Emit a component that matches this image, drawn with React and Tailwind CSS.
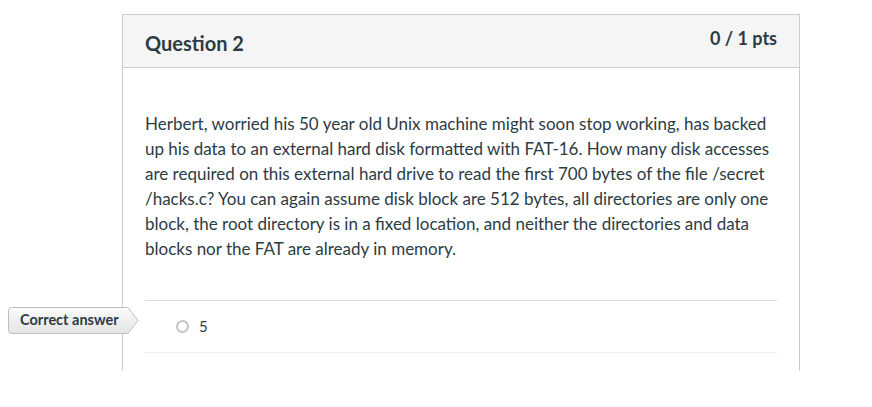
import React from 'react';

const CorrectTag = () => (
  <div className="absolute left-[-137px] top-[6px] w-[131px] h-[27px] flex items-center pl-[12px]">
    <svg className="absolute inset-0" width="131" height="27" viewBox="0 0 131 27">
      <defs>
        <linearGradient id="tagFill" x1="0" y1="0" x2="0" y2="1">
          <stop offset="0" stopColor="#fbfbfb" />
          <stop offset="1" stopColor="#e4e4e4" />
        </linearGradient>
      </defs>
      <path
        d="M3.5,0.5 H120 L130,13.5 L120,26.5 H3.5 Q0.5,26.5 0.5,23.5 V3.5 Q0.5,0.5 3.5,0.5 Z"
        fill="url(#tagFill)"
        stroke="#bfbfbf"
      />
    </svg>
    <span className="relative text-[14.5px] font-bold text-[#2d3b45] leading-none">Correct answer</span>
  </div>
);

const Answer = ({ label, correct, first }) => (
  <div className={`relative h-[52px] flex items-center pl-[31px] border-t ${first ? 'border-[#dcdcdc]' : 'border-[#efefef]'}`}>
    {correct && <CorrectTag />}
    <span className="w-[13px] h-[13px] rounded-full border-2 border-[#c4c4c4] bg-white mr-[10px]" />
    {label && <span className="text-[15px] text-[#2d3b45]">{label}</span>}
  </div>
);

export default function App() {
  return (
    <div className="w-full h-[407px] bg-white" style={{ fontFamily: 'Lato, "Open Sans", sans-serif' }}>
      <div className="h-[371px] overflow-hidden pt-[14px]">
        <div className="ml-[122px] w-[678px] h-[420px] border border-[#c7cdd1] bg-white">
          {/* header */}
          <div className="h-[53px] bg-[#f5f5f5] border-b border-[#c7cdd1] px-[22px] flex justify-between items-start">
            <h2 className="pt-[15px] text-[20px] leading-[26px] font-bold text-[#2d3b45]">Question 2</h2>
            <span className="pt-[11px] text-[18px] leading-[24px] font-bold text-[#2d3b45]">0 / 1 pts</span>
          </div>

          {/* body */}
          <div className="px-[22px]">
            <p className="mt-[43px] text-[17px] leading-[25px] text-[#2d3b45]">
              Herbert, worried his 50 year old Unix machine might soon stop working, has backed up his data to an
              external hard disk formatted with FAT-16. How many disk accesses are required on this external hard
              drive to read the first 700 bytes of the file /secret /hacks.c? You can again assume disk block are
              512 bytes, all directories are only one block, the root directory is in a fixed location, and neither
              the directories and data blocks nor the FAT are already in memory.
            </p>

            <div className="mt-[39px]">
              <Answer label="5" correct first />
              <Answer />
            </div>
          </div>
        </div>
      </div>
    </div>
  );
}
